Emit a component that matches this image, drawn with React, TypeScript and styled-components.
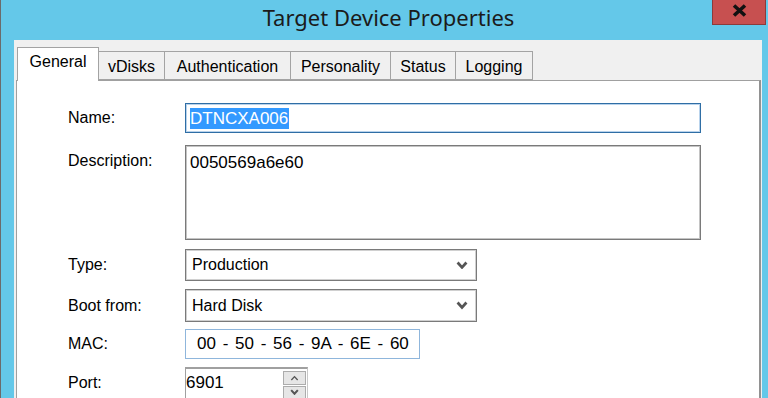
import React from 'react';
import styled, { createGlobalStyle } from 'styled-components';

const GlobalStyle = createGlobalStyle`
  html, body {
    margin: 0;
    padding: 0;
    overflow: hidden;
  }
  body {
    font-family: "Liberation Sans", Arial, sans-serif;
    color: #000;
  }
`;

const Window = styled.div`
  width: 768px;
  height: 398px;
  box-sizing: border-box;
  background: #64c8e9;
  border-left: 1px solid #6b6b6b;
  display: flex;
  flex-direction: column;
  overflow: hidden;
`;

const TitleBar = styled.div`
  position: relative;
  height: 40px;
  flex: none;
  display: flex;
  align-items: center;
  justify-content: center;
`;

const Title = styled.h1`
  margin: 0;
  padding: 0 0 6px 8px;
  font-family: "Noto Sans", "Open Sans", sans-serif;
  font-weight: 400;
  font-size: 22px;
  color: #1b1b1b;
`;

const CloseButton = styled.div`
  position: absolute;
  top: 0;
  right: 2px;
  width: 54px;
  height: 25px;
  box-sizing: border-box;
  background: #c75050;
  border: 1px solid #8c3b3b;
  border-top: none;
  display: flex;
  align-items: center;
  justify-content: center;
  padding-bottom: 3px;
`;

const Client = styled.div`
  flex: 1;
  margin: 0 6px 0 13px;
  padding-top: 7px;
  background: #f0f0f0;
  display: flex;
  flex-direction: column;
`;

const TabRow = styled.div`
  display: flex;
  align-items: flex-end;
  padding-left: 3px;
  height: 33px;
  flex: none;
`;

const Tab = styled.div<{ $w: number; $active?: boolean }>`
  position: relative;
  box-sizing: border-box;
  width: ${(p) => p.$w}px;
  height: ${(p) => (p.$active ? 34 : 29)}px;
  margin-left: ${(p) => (p.$active ? 0 : -1)}px;
  margin-bottom: ${(p) => (p.$active ? -1 : 0)}px;
  padding-top: ${(p) => (p.$active ? 4 : 5)}px;
  z-index: ${(p) => (p.$active ? 2 : 1)};
  background: ${(p) => (p.$active ? '#fff' : '#f0f0f0')};
  border: 1px solid #a3a3a3;
  border-bottom: ${(p) => (p.$active ? 'none' : '1px solid #a3a3a3')};
  font-size: 16px;
  line-height: 20px;
  text-align: center;
  white-space: nowrap;
`;

const Pane = styled.div`
  flex: 1;
  margin: 0 1px 0 2px;
  background: #fff;
  border: 1px solid #a0a0a0;
  border-right: 2px solid #929292;
  border-bottom: none;
  padding: 22px 0 0 51px;
`;

const Field = styled.div<{ $top: number }>`
  display: flex;
  align-items: flex-start;
  margin-top: ${(p) => p.$top}px;
`;

const Label = styled.div<{ $h: number }>`
  width: 117px;
  flex: none;
  font-size: 16px;
  line-height: ${(p) => p.$h}px;
`;

const TextBox = styled.div<{ $w: number; $h: number; $focus?: boolean }>`
  box-sizing: border-box;
  width: ${(p) => p.$w}px;
  height: ${(p) => p.$h}px;
  border: 1px solid ${(p) => (p.$focus ? '#2f6ea5' : '#7a7a7a')};
  box-shadow: inset 0 0 0 1px ${(p) => (p.$focus ? '#b9d3ec' : '#c4c4c4')};
  background: #fff;
  font-size: 17px;
  padding: 0 4px;
  display: flex;
  align-items: center;
`;

const MultiLine = styled(TextBox)`
  align-items: flex-start;
  padding-top: 6px;
  line-height: 22px;
`;

const Selection = styled.span`
  background: #3399ff;
  color: #fff;
  line-height: 21px;
  padding: 0 1px 0 0;
`;

const Select = styled.div<{ $h: number }>`
  box-sizing: border-box;
  width: 292px;
  height: ${(p) => p.$h}px;
  border: 1px solid #7a7a7a;
  box-shadow: inset 0 0 0 1px #d0d0d0;
  display: flex;
  align-items: center;
  justify-content: space-between;
  padding: 0 8px 0 6px;
  font-size: 16px;
`;

const MacBox = styled.div`
  box-sizing: border-box;
  width: 235px;
  height: 30px;
  border: 1px solid #8fb6dc;
  display: flex;
  align-items: center;
  padding-left: 11px;
  font-size: 17px;
  word-spacing: 2px;
`;

const Spin = styled.div`
  display: flex;
  height: 32px;
`;

const SpinInput = styled.div`
  box-sizing: border-box;
  width: 97px;
  height: 32px;
  border: 1px solid #a0a0a0;
  border-top-width: 2px;
  border-right: none;
  font-size: 17px;
  line-height: 28px;
`;

const SpinButtons = styled.div`
  box-sizing: border-box;
  width: 26px;
  height: 32px;
  border-top: 2px solid #a0a0a0;
  border-right: 1px solid #c8c8c8;
  padding: 2px 1px 0 1px;
  display: flex;
  flex-direction: column;
  gap: 1px;
`;

const SpinButton = styled.div`
  flex: 1;
  max-height: 13px;
  background: #e6e6e6;
  border: 1px solid #acacac;
  display: flex;
  align-items: center;
  justify-content: center;
`;

const Chevron = ({ up, size = 12 }: { up?: boolean; size?: number }) => (
  <svg width={size} height={size * 0.7} viewBox="0 0 10 7">
    <polyline
      points={up ? '1.5,5.5 5,1.8 8.5,5.5' : '1.3,1.3 5,5.3 8.7,1.3'}
      fill="none"
      stroke="#555"
      strokeWidth={up ? 1.5 : 2.3}
    />
  </svg>
);

const tabs: { name: string; w: number }[] = [
  { name: 'vDisks', w: 67 },
  { name: 'Authentication', w: 127 },
  { name: 'Personality', w: 101 },
  { name: 'Status', w: 66 },
  { name: 'Logging', w: 78 },
];

const App = () => (
  <>
    <GlobalStyle />
    <Window>
      <TitleBar>
        <Title>Target Device Properties</Title>
        <CloseButton>
          <svg width="15" height="13" viewBox="0 0 15 13">
            <path d="M2 1.5 L13 11.5 M13 1.5 L2 11.5" stroke="#111" strokeWidth="3.6" />
          </svg>
        </CloseButton>
      </TitleBar>
      <Client>
        <TabRow>
          <Tab $w={82} $active>
            General
          </Tab>
          {tabs.map((t) => (
            <Tab key={t.name} $w={t.w}>
              {t.name}
            </Tab>
          ))}
        </TabRow>
        <Pane>
          <Field $top={0}>
            <Label $h={30}>Name:</Label>
            <TextBox $w={516} $h={30} $focus>
              <Selection>DTNCXA006</Selection>
            </TextBox>
          </Field>
          <Field $top={12}>
            <Label $h={32}>Description:</Label>
            <MultiLine $w={516} $h={95}>
              0050569a6e60
            </MultiLine>
          </Field>
          <Field $top={9}>
            <Label $h={32}>Type:</Label>
            <Select $h={32}>
              Production
              <Chevron />
            </Select>
          </Field>
          <Field $top={8}>
            <Label $h={33}>Boot from:</Label>
            <Select $h={33}>
              Hard Disk
              <Chevron />
            </Select>
          </Field>
          <Field $top={7}>
            <Label $h={30}>MAC:</Label>
            <MacBox>00 - 50 - 56 - 9A - 6E - 60</MacBox>
          </Field>
          <Field $top={8}>
            <Label $h={32}>Port:</Label>
            <Spin>
              <SpinInput>6901</SpinInput>
              <SpinButtons>
                <SpinButton>
                  <Chevron up size={9} />
                </SpinButton>
                <SpinButton>
                  <Chevron size={9} />
                </SpinButton>
              </SpinButtons>
            </Spin>
          </Field>
        </Pane>
      </Client>
    </Window>
  </>
);

export default App;
